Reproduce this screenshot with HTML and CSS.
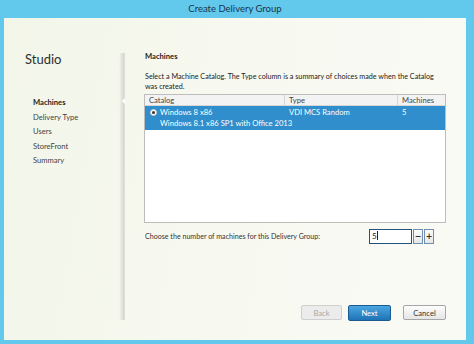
FILE: index.html
```html
<!DOCTYPE html>
<html lang="en">
<head>
    <meta charset="UTF-8">
    <title>Create Delivery Group</title>
    <link rel="stylesheet" href="styles.css">
</head>
<body>
    <div class="window">
        <div class="titlebar">Create Delivery Group</div>
        <div class="main">
            <div class="nav">
                <h1 class="brand">Studio</h1>
                <ul class="steps">
                    <li class="step active">Machines</li>
                    <li class="step">Delivery Type</li>
                    <li class="step">Users</li>
                    <li class="step">StoreFront</li>
                    <li class="step">Summary</li>
                </ul>
            </div>
            <div class="sep"></div>
            <div class="content">
                <h2 class="heading">Machines</h2>
                <p class="desc">Select a Machine Catalog. The Type column is a summary of choices made when the Catalog was created.</p>
                <div class="table">
                    <div class="thead">
                        <div class="col col-catalog">Catalog</div>
                        <div class="col col-type">Type</div>
                        <div class="col col-count">Machines</div>
                    </div>
                    <div class="row selected">
                        <div class="col col-catalog">
                            <span class="radio"></span>
                            <div class="names">
                                <div>Windows 8 x86</div>
                                <div>Windows 8.1 x86 SP1 with Office 2013</div>
                            </div>
                        </div>
                        <div class="col col-type">VDI MCS Random</div>
                        <div class="col col-count">5</div>
                    </div>
                </div>
                <div class="count-row">
                    <span class="count-label">Choose the number of machines for this Delivery Group:</span>
                    <div class="spinner">
                        <div class="spin-input">5<span class="caret"></span></div>
                        <button class="spin-btn">&minus;</button>
                        <button class="spin-btn">+</button>
                    </div>
                </div>
                <div class="footer">
                    <button class="btn btn-back" disabled>Back</button>
                    <button class="btn btn-next">Next</button>
                    <button class="btn btn-cancel">Cancel</button>
                </div>
            </div>
        </div>
    </div>
</body>
</html>
```

FILE: styles.css
```css
* {
    box-sizing: border-box;
}

body {
    margin: 0;
    background: #62c8ec;
    font-family: 'Lato', 'Noto Sans', sans-serif;
    font-size: 7.6px;
    color: #333;
}

.window {
    width: 474px;
    height: 344px;
    display: flex;
    flex-direction: column;
    padding: 0 8px 4px 4px;
    background: #62c8ec;
}

.titlebar {
    height: 18px;
    line-height: 18px;
    text-align: center;
    font-size: 9.5px;
    color: #1a344c;
}

.main {
    flex: 1;
    display: flex;
    background: linear-gradient(100deg, #f2f5e8 0%, #f7f9f0 45%, #f9faf4 100%);
}

.nav {
    width: 115px;
    padding: 33px 0 0 21px;
}

.brand {
    margin: 0;
    font-size: 13px;
    font-weight: normal;
    line-height: 16px;
    color: #2e2e2e;
}

.steps {
    list-style: none;
    margin: 28px 0 0 8px;
    padding: 0;
}

.step {
    line-height: 14.5px;
    color: #444;
}

.step.active {
    font-weight: bold;
    color: #222;
}

.sep {
    width: 6px;
    margin: 35px 0 20px;
    position: relative;
    background: linear-gradient(90deg, rgba(210, 212, 205, 0), #d6d8d0 80%, #e2e4dc);
}

.sep::after {
    content: '';
    position: absolute;
    right: 0;
    top: 45px;
    border-top: 3px solid transparent;
    border-bottom: 3px solid transparent;
    border-right: 3px solid #ffffff;
}

.content {
    flex: 1;
    display: flex;
    flex-direction: column;
    padding: 33px 20px 20px 19px;
}

.heading {
    margin: 0 0 0 1px;
    font-size: 7.6px;
    font-weight: bold;
    line-height: 11px;
    color: #222;
}

.desc {
    margin: 10px 0 2px 1px;
    font-size: 7.2px;
    line-height: 10px;
    color: #222;
}

.table {
    height: 129px;
    border: 1px solid #bdbdbd;
    background: #ffffff;
}

.thead {
    display: flex;
    height: 11px;
    line-height: 11px;
    background: #f3f3f3;
    border-bottom: 1px solid #d6d6d6;
    color: #444;
}

.thead .col {
    border-right: 1px solid #d6d6d6;
}

.thead .col:last-child {
    border-right: none;
}

.col {
    padding-left: 4px;
}

.col-catalog {
    width: 140px;
}

.col-type {
    width: 113px;
}

.col-count {
    flex: 1;
}

.row {
    display: flex;
    height: 24px;
    padding-top: 1px;
    line-height: 11px;
}

.row.selected {
    background: #2f8ecb;
    color: #ffffff;
}

.row .col-catalog {
    display: flex;
    padding-left: 5px;
}

.radio {
    width: 7px;
    height: 7px;
    margin: 2px 3px 0 0;
    border-radius: 50%;
    background: #ffffff;
    border: 1px solid #d0d0d0;
    position: relative;
    flex-shrink: 0;
}

.radio::after {
    content: '';
    position: absolute;
    left: 1px;
    top: 1px;
    width: 3px;
    height: 3px;
    border-radius: 50%;
    background: #333;
}

.names {
    white-space: nowrap;
}

.count-row {
    display: flex;
    align-items: center;
    justify-content: space-between;
    margin-top: 6px;
    padding-right: 12px;
    height: 15px;
    color: #333;
}

.count-label {
    margin-left: 1px;
    font-size: 7.1px;
}

.spinner {
    display: flex;
    height: 15px;
}

.spin-input {
    width: 43px;
    height: 15px;
    border: 1.5px solid #24527f;
    background: #ffffff;
    font-size: 8px;
    line-height: 12px;
    padding-left: 2px;
    color: #222;
}

.caret {
    display: inline-block;
    width: 1px;
    height: 9px;
    vertical-align: -1px;
    background: #222;
}

.spin-btn {
    width: 10px;
    height: 15px;
    margin-left: 1px;
    padding: 0;
    border: 1px solid #6f8fae;
    background: linear-gradient(#fbfbfb, #e6e6e6);
    font-family: 'DejaVu Sans', sans-serif;
    font-size: 8px;
    font-weight: bold;
    line-height: 12px;
    color: #333;
}

.footer {
    margin-top: auto;
    display: flex;
    justify-content: flex-end;
    align-items: center;
    height: 15px;
}

.btn {
    height: 15px;
    width: 43px;
    padding: 0;
    font-family: 'Lato', 'Noto Sans', sans-serif;
    font-size: 7.6px;
    border-radius: 2px;
}

.btn-back {
    width: 41px;
    background: #ececec;
    border: 1px solid #cfcfcf;
    color: #a9a9a9;
}

.btn-next {
    height: 16px;
    margin-left: 6px;
    background: linear-gradient(#4aa6e0, #1f73b7);
    border: 1px solid #1a5a92;
    color: #ffffff;
}

.btn-cancel {
    margin-left: 12px;
    background: linear-gradient(#fdfdfd, #e6e6e6);
    border: 1px solid #a5a5a5;
    color: #333;
}
```
